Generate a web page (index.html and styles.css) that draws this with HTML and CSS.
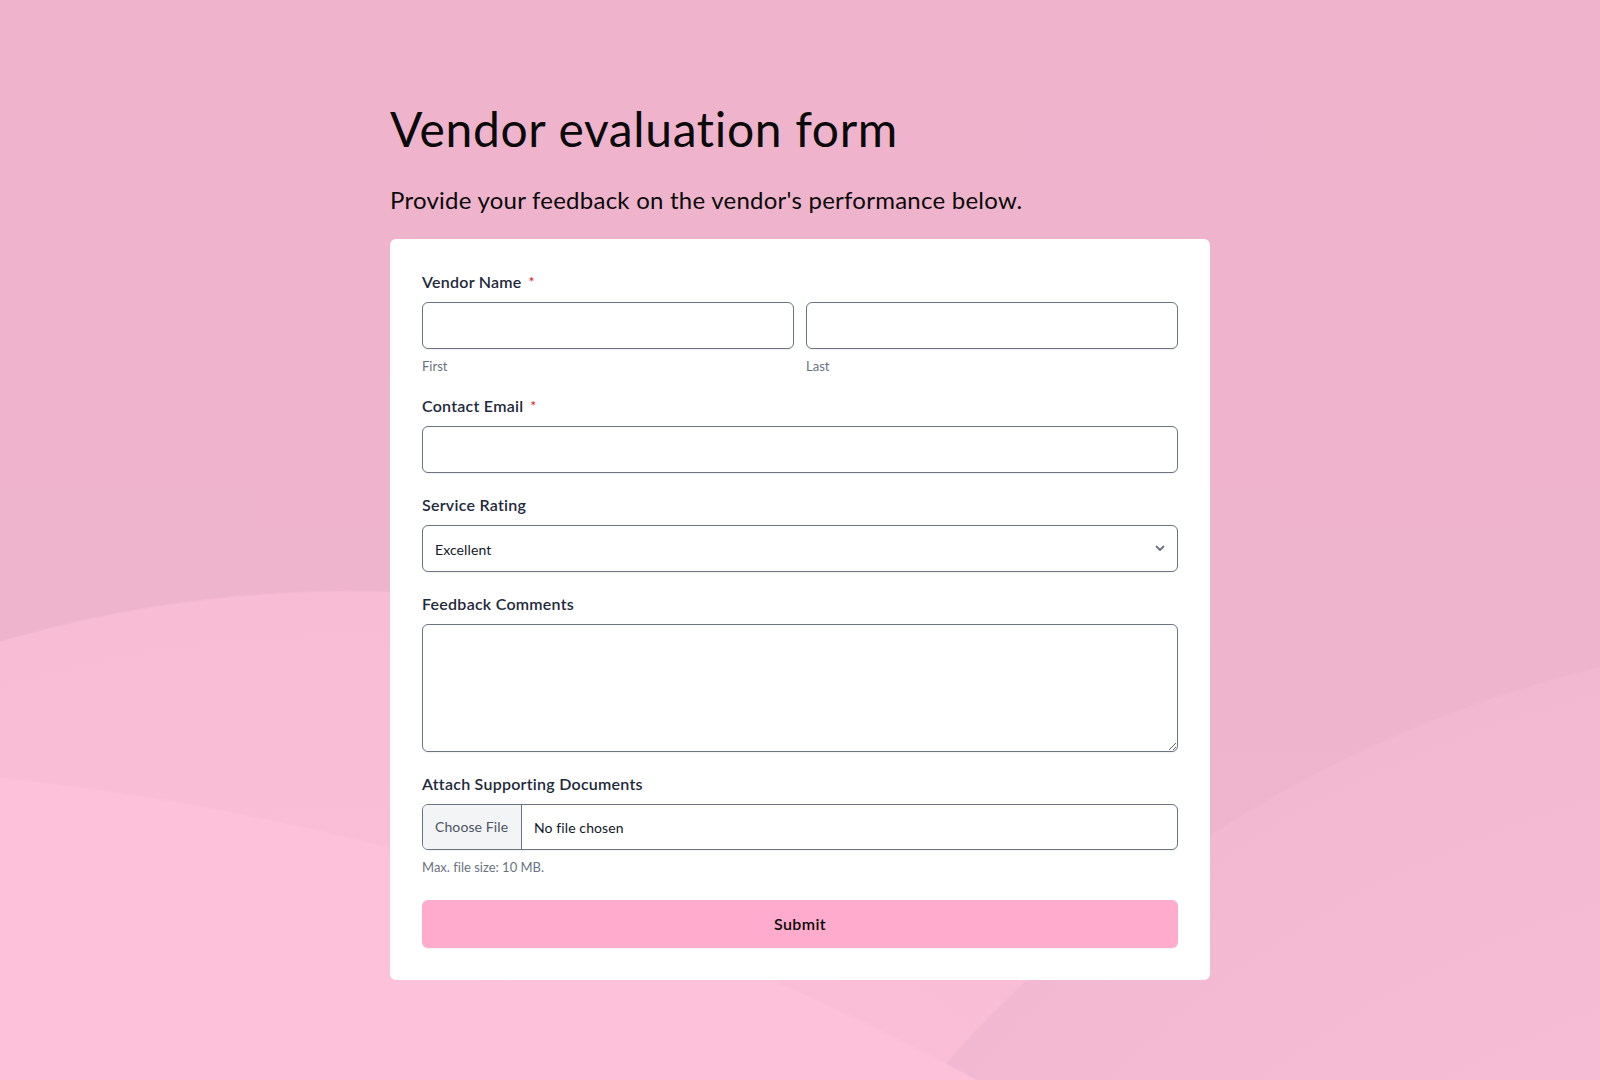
FILE: index.html
```html
<!DOCTYPE html>
<html lang="en">
<head>
<meta charset="utf-8">
<title>Vendor evaluation form</title>
<link rel="stylesheet" href="styles.css">
</head>
<body>
<main class="page">
  <h1 class="title">Vendor evaluation form</h1>
  <p class="subtitle">Provide your feedback on the vendor's performance below.</p>
  <form class="card">
    <div class="field">
      <label class="label">Vendor Name <span class="req">*</span></label>
      <div class="name-row">
        <div class="name-col">
          <input class="control" type="text">
          <span class="hint">First</span>
        </div>
        <div class="name-col">
          <input class="control" type="text">
          <span class="hint">Last</span>
        </div>
      </div>
    </div>
    <div class="field">
      <label class="label">Contact Email <span class="req">*</span></label>
      <input class="control" type="email">
    </div>
    <div class="field">
      <label class="label">Service Rating</label>
      <div class="select-wrap">
        <select class="control select">
          <option>Excellent</option>
          <option>Good</option>
          <option>Average</option>
          <option>Poor</option>
        </select>
        <svg class="chevron" width="12" height="12" viewBox="0 0 12 12" aria-hidden="true"><path d="M2.5 4.5 L6 8 L9.5 4.5" fill="none" stroke="#6b7280" stroke-width="1.8" stroke-linecap="round" stroke-linejoin="round"/></svg>
      </div>
    </div>
    <div class="field">
      <label class="label">Feedback Comments</label>
      <textarea class="control textarea"></textarea>
    </div>
    <div class="field">
      <label class="label">Attach Supporting Documents</label>
      <div class="control file">
        <span class="file-btn">Choose File</span>
        <span class="file-name">No file chosen</span>
      </div>
      <span class="hint">Max. file size: 10 MB.</span>
    </div>
    <button class="submit" type="button">Submit</button>
  </form>
</main>
</body>
</html>
```
FILE: styles.css
```css
* { box-sizing: border-box; }

html, body {
  margin: 0;
  min-height: 100%;
}

body {
  font-family: Lato, "Open Sans", sans-serif;
  font-variant-ligatures: none;
  color: #0b0b0b;
  min-height: 1080px;
  background-color: #efb4cc;
  background-image:
    radial-gradient(circle 2600px at -265px 3363px, #fec3db 0, #fdc1da 99.9%, transparent 100%),
    radial-gradient(circle 1270px at 1900px 1900px, #fcc1d9 0, #f8bdd6 60%, #f3b8d1 99.8%, transparent 100%),
    radial-gradient(ellipse 1200px 1160px at 350px 1750px, #fcc1d9 0, #fbc0d8 55%, #f8bdd5 99.8%, transparent 100%),
    linear-gradient(180deg, #efb4cc 0, #efb4cd 60%, #f0b5ce 100%);
  background-repeat: no-repeat;
}

.page {
  width: 820px;
  margin: 0 auto;
  padding-top: 100px;
  padding-bottom: 100px;
}

.title {
  margin: 0;
  font-size: 48px;
  line-height: 1.2;
  font-weight: 400;
  letter-spacing: 0.65px;
  color: #0a0a0a;
}

.subtitle {
  margin: 24px 0 0;
  font-size: 24px;
  line-height: 36px;
  font-weight: 400;
  letter-spacing: 0.24px;
  color: #0a0a0a;
}

.card {
  margin-top: 21px;
  background: #fff;
  border-radius: 6px;
  padding: 31px 32px 32px;
  display: flex;
  flex-direction: column;
  gap: 20px;
}

.field {
  display: flex;
  flex-direction: column;
}

.label {
  font-size: 16px;
  line-height: 24px;
  font-weight: 600;
  letter-spacing: 0.25px;
  color: #1e293b;
  margin-bottom: 8px;
}

.req {
  color: #dc2626;
  font-size: 13px;
  margin-left: 3px;
  vertical-align: 1px;
}

.name-row {
  display: grid;
  grid-template-columns: 1fr 1fr;
  gap: 12px;
}

.name-col {
  display: flex;
  flex-direction: column;
}

.control {
  width: 100%;
  height: 47px;
  border: 1px solid #6b7280;
  border-radius: 6px;
  background: #fff;
  font-family: Lato, "Open Sans", sans-serif;
  font-size: 14px;
  letter-spacing: 0.1px;
  color: #111827;
  padding: 0 12px;
  box-shadow: 0 1px 2px rgba(0, 0, 0, 0.06);
  outline: none;
  margin: 0;
}

.hint {
  margin-top: 9px;
  font-size: 13px;
  line-height: 16px;
  color: #6b7280;
}

.select-wrap {
  position: relative;
}

.select {
  appearance: none;
  -webkit-appearance: none;
  padding-top: 2px;
}

.chevron {
  position: absolute;
  right: 12px;
  top: 17px;
  pointer-events: none;
}

.textarea {
  height: 128px;
  padding: 10px 12px;
  resize: vertical;
  display: block;
}

.file {
  height: 46px;
  display: flex;
  align-items: stretch;
  padding: 0;
  overflow: hidden;
}

.file-btn {
  display: flex;
  align-items: center;
  width: 99px;
  padding: 0 12px;
  background: #f3f4f6;
  border-right: 1px solid #6b7280;
  color: #4b5563;
  font-size: 14px;
}

.file-name {
  display: flex;
  align-items: center;
  padding: 2px 12px 0;
  font-size: 14px;
  color: #111827;
}

.submit {
  margin-top: 5px;
  height: 48px;
  width: 100%;
  border: none;
  border-radius: 6px;
  background: #ffabcd;
  color: #0a0a0a;
  font-family: Lato, "Open Sans", sans-serif;
  font-size: 16px;
  font-weight: 600;
  letter-spacing: 0.4px;
  box-shadow: 0 1px 2px rgba(0, 0, 0, 0.06);
  cursor: pointer;
}
```
